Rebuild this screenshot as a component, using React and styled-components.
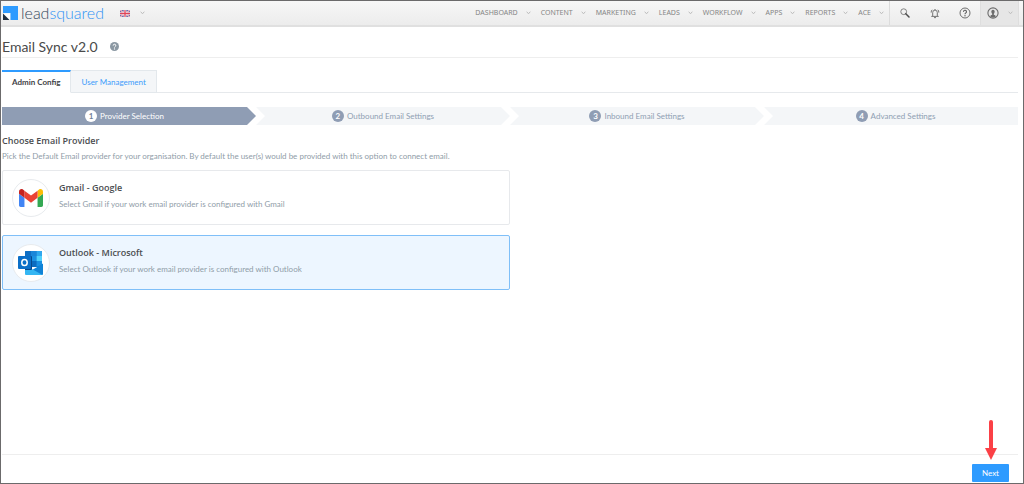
import React, { useState } from "react";
import styled, { createGlobalStyle } from "styled-components";

const GlobalStyle = createGlobalStyle`
  *, *::before, *::after { box-sizing: border-box; }
  body {
    margin: 0;
    background: #fff;
    color: #4a4d50;
    font-family: Lato, "Open Sans", sans-serif;
    font-size: 8px;
    line-height: 12px;
  }
  h1, h2, h3, p, ol, ul { margin: 0; padding: 0; }
  ol, ul { list-style: none; }
  button, select, input { font: inherit; }
`;

const Frame = styled.div`
  display: flex;
  flex-direction: column;
  min-height: 100vh;
  border: 1px solid #6b6a6b;
  padding-right: 5px;
`;

const TopBar = styled.header`
  display: flex;
  align-items: stretch;
  height: 26px;
  margin-right: -5px;
  padding-right: 4px;
  background: linear-gradient(#f7f7f7, #ececec);
  border-bottom: 2px solid #e0e0e0;
`;

const Brand = styled.a`
  display: flex;
  align-items: center;
  gap: 3px;
  padding-left: 2px;
  color: #33475b;
  font-size: 16px;
  font-weight: 300;
  line-height: 22px;
  text-decoration: none;
`;

const BrandAccent = styled.span`
  color: #2e93f5;
`;

const Language = styled.button`
  display: flex;
  align-items: center;
  gap: 10px;
  margin-left: 16px;
  padding: 0;
  border: 0;
  background: none;
`;

const Nav = styled.nav`
  margin-left: auto;
  padding-right: 5px;
`;

const NavList = styled.ul`
  display: flex;
  height: 100%;
`;

const NavItem = styled.li`
  display: flex;
  align-items: center;
  margin-left: 10px;
`;

const NavLink = styled.a`
  display: flex;
  align-items: center;
  gap: 8px;
  color: #858585;
  font-family: "Noto Sans", sans-serif;
  font-size: 7px;
  text-decoration: none;
`;

const Tools = styled.div`
  display: flex;
  border-left: 1px solid #dcdcdc;
`;

const ToolButton = styled.button`
  display: flex;
  align-items: center;
  justify-content: center;
  width: 30px;
  padding: 0;
  border: 0;
  background: none;
  color: #5a5a5a;
`;

const ProfileButton = styled(ToolButton)`
  gap: 9px;
  width: 39px;
  border: 1px solid #dedede;
  border-width: 0 1px;
  background: #e6e6e6;
`;

const TitleRow = styled.div`
  display: flex;
  align-items: center;
  gap: 12px;
  height: 31px;
  margin-left: 1px;
  padding-top: 9px;
  border-bottom: 1px solid #eee;
`;

const Title = styled.h1`
  color: #4a4a4a;
  font-size: 14px;
  font-weight: 400;
  line-height: 20px;
`;

const HelpButton = styled.button`
  display: flex;
  padding: 0;
  border: 0;
  background: none;
`;

const Tabs = styled.div`
  display: flex;
  margin: 12px 0 0 1px;
`;

const Tab = styled.button`
  height: 23px;
  padding: 0 10px;
  border: 1px solid #e3e8ec;
  border-left-width: 0;
  background: #f4f6f8;
  color: #3d9cfb;
  line-height: 20px;

  &[aria-selected="true"] {
    border-top: 2px solid #2e9bff;
    border-bottom-color: #fff;
    background: #fff;
    color: #3f4347;
    font-weight: 700;
  }
`;

const TabRule = styled.div`
  flex: 1;
  border-bottom: 1px solid #e6e9ec;
`;

const Steps = styled.ol`
  display: flex;
  margin: 14px 0 0 1px;
`;

const Step = styled.li`
  display: flex;
  width: 25%;
  align-items: center;
  justify-content: center;
  gap: 3px;
  height: 18px;
  background: #f4f6f8;
  color: #8fa0b3;
  clip-path: polygon(0 0, calc(100% - 9px) 0, 100% 50%, calc(100% - 9px) 100%, 0 100%, 9px 50%);

  &:first-child {
    padding-right: 9px;
    clip-path: polygon(0 0, calc(100% - 9px) 0, 100% 50%, calc(100% - 9px) 100%, 0 100%);
  }

  &:last-child {
    padding-left: 9px;
    clip-path: polygon(0 0, 100% 0, 100% 100%, 0 100%, 9px 50%);
  }

  &[aria-current="step"] {
    background: #8f9db4;
    color: #fff;
  }
`;

const StepNumber = styled.span`
  width: 12px;
  height: 12px;
  border-radius: 50%;
  background: #8f9db4;
  color: #fff;
  font-weight: 700;
  text-align: center;

  ${Step}[aria-current="step"] & {
    background: #fff;
    color: #6f7f98;
  }
`;

const Content = styled.main`
  flex: 1;
  margin-left: 1px;
  padding-top: 9px;
`;

const SectionTitle = styled.h2`
  font-family: "Open Sans", sans-serif;
  font-size: 9px;
  font-weight: 600;
  line-height: 14px;
`;

const Muted = styled.p`
  color: #8f9da8;
`;

const SectionText = styled(Muted)`
  margin-top: 2px;
`;

const Providers = styled.div`
  display: grid;
  gap: 10px;
  width: 50%;
  margin-top: 8px;
`;

const Provider = styled.label`
  display: flex;
  gap: 9px;
  height: 55px;
  padding: 8px 9px;
  border: 1px solid #e7e9ec;
  border-radius: 2px;
  background: #fff;

  &:has(input:checked) {
    border-color: #7fbff8;
    background: #edf6ff;
  }
`;

const HiddenRadio = styled.input`
  position: absolute;
  opacity: 0;
  pointer-events: none;
`;

const ProviderIcon = styled.span`
  display: flex;
  align-items: center;
  justify-content: center;
  width: 38px;
  height: 38px;
  border: 1px solid #e8ebee;
  border-radius: 50%;
  background: #fff;
`;

const ProviderName = styled.h3`
  margin: 2px 0 3px;
  font-family: "Open Sans", sans-serif;
  font-size: 9px;
  font-weight: 600;
  line-height: 14px;
`;

const Footer = styled.footer`
  display: flex;
  justify-content: flex-end;
  margin-left: 1px;
  padding: 9px 9px 1px 0;
  border-top: 1px solid #eee;
`;

const NextWrap = styled.div`
  position: relative;
`;

const NextButton = styled.button`
  display: block;
  width: 37px;
  height: 18px;
  padding: 0;
  border: 0;
  border-radius: 1px;
  background: #2e9bff;
  color: #fff;
`;

const Pointer = styled.svg`
  position: absolute;
  bottom: 100%;
  left: 12px;
  margin-bottom: 3px;
`;

const Chevron = () => (
  <svg width="5" height="4" viewBox="0 0 5 4" fill="none" stroke="#bdbdbd" aria-hidden="true">
    <path d="M.7 .7 2.5 2.8 4.3 .7" />
  </svg>
);

const LogoMark = () => (
  <svg width="15" height="14" viewBox="0 0 15 14" aria-hidden="true">
    <path d="M0 0H15V14H7.5V7H0Z" fill="#2e9bff" />
    <path d="M0 7.5H7V14H0Z" fill="#fff" />
    <path d="M0 7.5 6.5 14H0Z" fill="#1f2f40" />
  </svg>
);

const Flag = () => (
  <svg width="10" height="7" viewBox="0 0 10 7" aria-hidden="true">
    <rect width="10" height="7" fill="#5765a8" />
    <path d="M0 0 10 7M10 0 0 7" stroke="#f3dfe6" strokeWidth="1.4" />
    <path d="M0 0 10 7M10 0 0 7" stroke="#d8647a" strokeWidth=".5" />
    <path d="M5 0V7M0 3.5H10" stroke="#fff" strokeWidth="2.6" />
    <path d="M5 0V7M0 3.5H10" stroke="#df4458" strokeWidth="1.3" />
  </svg>
);

const SearchIcon = () => (
  <svg width="10" height="10" viewBox="0 0 10 10" fill="none" aria-hidden="true">
    <circle cx="3.7" cy="3.7" r="2.9" stroke="#777" strokeWidth=".9" />
    <path d="M5.8 5.8 9 9" stroke="#4d4d4d" strokeWidth="1.5" strokeLinecap="round" />
  </svg>
);

const BellIcon = () => (
  <svg width="10" height="11" viewBox="0 0 10 11" fill="none" stroke="#666" strokeWidth=".9" aria-hidden="true">
    <path d="M2.7 8V4.6a2.3 2.5 0 0 1 4.6 0V8" />
    <path d="M1.3 8.4H8.7M5 2V1M1.2 4.6Q1 2.8 2.2 1.8M8.8 4.6Q9 2.8 7.8 1.8" />
    <path d="M4 9.3Q5 10.6 6 9.3" />
  </svg>
);

const HelpIcon = () => (
  <svg width="12" height="12" viewBox="0 0 12 12" fill="none" stroke="#606060" aria-hidden="true">
    <circle cx="6" cy="6" r="5" strokeWidth=".9" />
    <path d="M4.5 4.9A1.5 1.5 0 1 1 6.7 6.1Q6 6.5 6 7.2" strokeWidth="1.1" />
    <circle cx="6" cy="8.7" r=".7" fill="#606060" stroke="none" />
  </svg>
);

const UserIcon = () => (
  <svg width="12" height="12" viewBox="0 0 12 12" aria-hidden="true">
    <circle cx="6" cy="6" r="5.1" fill="none" stroke="#6b6b6b" strokeWidth="1.1" />
    <ellipse cx="6" cy="4.8" rx="1.7" ry="2.1" fill="#6b6b6b" />
    <path d="M5.2 6H6.8V7.8Q8.6 8.2 8.8 9.4 6 11.4 3.2 9.4 3.4 8.2 5.2 7.8Z" fill="#6b6b6b" />
  </svg>
);

const HelpBadge = () => (
  <svg width="9" height="9" viewBox="0 0 9 9" aria-hidden="true">
    <circle cx="4.5" cy="4.5" r="4.5" fill="#8b98a3" />
    <path d="M3.2 3.6A1.3 1.3 0 1 1 5 4.7Q4.5 5 4.5 5.5" fill="none" stroke="#fff" />
    <circle cx="4.5" cy="6.9" r=".6" fill="#fff" />
  </svg>
);

const GmailIcon = () => (
  <svg width="24" height="18" viewBox="52 42 88 66" aria-hidden="true">
    <path fill="#4285f4" d="M58 108h14V74L52 59v43c0 3.3 2.7 6 6 6" />
    <path fill="#34a853" d="M120 108h14c3.3 0 6-2.7 6-6V59l-20 15" />
    <path fill="#fbbc04" d="M120 48v26l20-15v-8c0-7.4-8.5-11.6-14.4-7.2" />
    <path fill="#ea4335" d="M72 74V48l24 18 24-18v26L96 92" />
    <path fill="#c5221f" d="M52 51v8l20 15V48l-5.6-4.2C60.5 39.4 52 43.6 52 51" />
  </svg>
);

const OutlookIcon = () => (
  <svg width="26" height="26" viewBox="0 0 26 26" aria-hidden="true">
    <path d="M7 2Q7 1 8 1H23Q24 1 24 2V17H7Z" fill="#0a66b8" />
    <path d="M7 6V2Q7 1 8 1H13V6Z" fill="#0f6fc4" />
    <path d="M13 1H18.5V6H13Z" fill="#1a86d9" />
    <path d="M18.5 1H23Q24 1 24 2V6H18.5Z" fill="#2fa8ee" />
    <path d="M13 6H18.5V11H13Z" fill="#1a90e2" />
    <path d="M18.5 6H24V11H18.5Z" fill="#50d0fb" />
    <path d="M13 11H18.5V17H13Z" fill="#0c6cc0" />
    <path d="M18.5 11H24V15L18.5 17Z" fill="#1a90e2" />
    <path d="M25 13.5V24Q25 25 24 25H12L15 19.5Z" fill="#1183d6" />
    <path d="M7 15 24.5 25H8Q7 25 7 24Z" fill="#35b6f2" />
    <path d="M7 6H13Q14 6 14 7V19Q14 20 13 20H7Z" fill="#07498c" />
    <rect y="6" width="13" height="13" rx="1" fill="#0b6fc8" />
    <ellipse cx="6.5" cy="12.5" rx="2.7" ry="3.1" fill="none" stroke="#fff" strokeWidth="1.5" />
  </svg>
);

const navItems = ["DASHBOARD", "CONTENT", "MARKETING", "LEADS", "WORKFLOW", "APPS", "REPORTS", "ACE"];
const steps = ["Provider Selection", "Outbound Email Settings", "Inbound Email Settings", "Advanced Settings"];
const providers = [
  { id: "gmail", name: "Gmail - Google", text: "Select Gmail if your work email provider is configured with Gmail", Icon: GmailIcon },
  { id: "outlook", name: "Outlook - Microsoft", text: "Select Outlook if your work email provider is configured with Outlook", Icon: OutlookIcon },
];

export default function App() {
  const [provider, setProvider] = useState("outlook");

  return (
    <Frame>
      <GlobalStyle />
      <TopBar>
        <Brand href="#">
          <LogoMark />
          <span>lead<BrandAccent>squared</BrandAccent></span>
        </Brand>
        <Language type="button" aria-label="Language">
          <Flag />
          <Chevron />
        </Language>
        <Nav>
          <NavList>
            {navItems.map((label) => (
              <NavItem key={label}>
                <NavLink href="#">{label}<Chevron /></NavLink>
              </NavItem>
            ))}
          </NavList>
        </Nav>
        <Tools>
          <ToolButton type="button" aria-label="Search"><SearchIcon /></ToolButton>
          <ToolButton type="button" aria-label="Notifications"><BellIcon /></ToolButton>
          <ToolButton type="button" aria-label="Help"><HelpIcon /></ToolButton>
          <ProfileButton type="button" aria-label="Account"><UserIcon /><Chevron /></ProfileButton>
        </Tools>
      </TopBar>

      <TitleRow>
        <Title>Email Sync v2.0</Title>
        <HelpButton type="button" aria-label="About Email Sync"><HelpBadge /></HelpButton>
      </TitleRow>

      <Tabs role="tablist">
        <Tab type="button" role="tab" aria-selected="true">Admin Config</Tab>
        <Tab type="button" role="tab" aria-selected="false">User Management</Tab>
        <TabRule />
      </Tabs>

      <Steps>
        {steps.map((label, index) => (
          <Step key={label} aria-current={index === 0 ? "step" : undefined}>
            <StepNumber>{index + 1}</StepNumber>
            {label}
          </Step>
        ))}
      </Steps>

      <Content>
        <SectionTitle>Choose Email Provider</SectionTitle>
        <SectionText>
          Pick the Default Email provider for your organisation. By default the user(s) would be provided with this option to connect email.
        </SectionText>
        <Providers role="radiogroup" aria-label="Email provider">
          {providers.map(({ id, name, text, Icon }) => (
            <Provider key={id}>
              <HiddenRadio
                type="radio"
                name="provider"
                value={id}
                checked={provider === id}
                onChange={() => setProvider(id)}
              />
              <ProviderIcon><Icon /></ProviderIcon>
              <div>
                <ProviderName>{name}</ProviderName>
                <Muted>{text}</Muted>
              </div>
            </Provider>
          ))}
        </Providers>
      </Content>

      <Footer>
        <NextWrap>
          <Pointer width="14" height="42" viewBox="0 0 14 42" aria-hidden="true">
            <path d="M7 3V30" stroke="#fb4046" strokeWidth="4" strokeLinecap="round" />
            <path d="M1 29H13L7 41Z" fill="#fb4046" />
          </Pointer>
          <NextButton type="button">Next</NextButton>
        </NextWrap>
      </Footer>
    </Frame>
  );
}
